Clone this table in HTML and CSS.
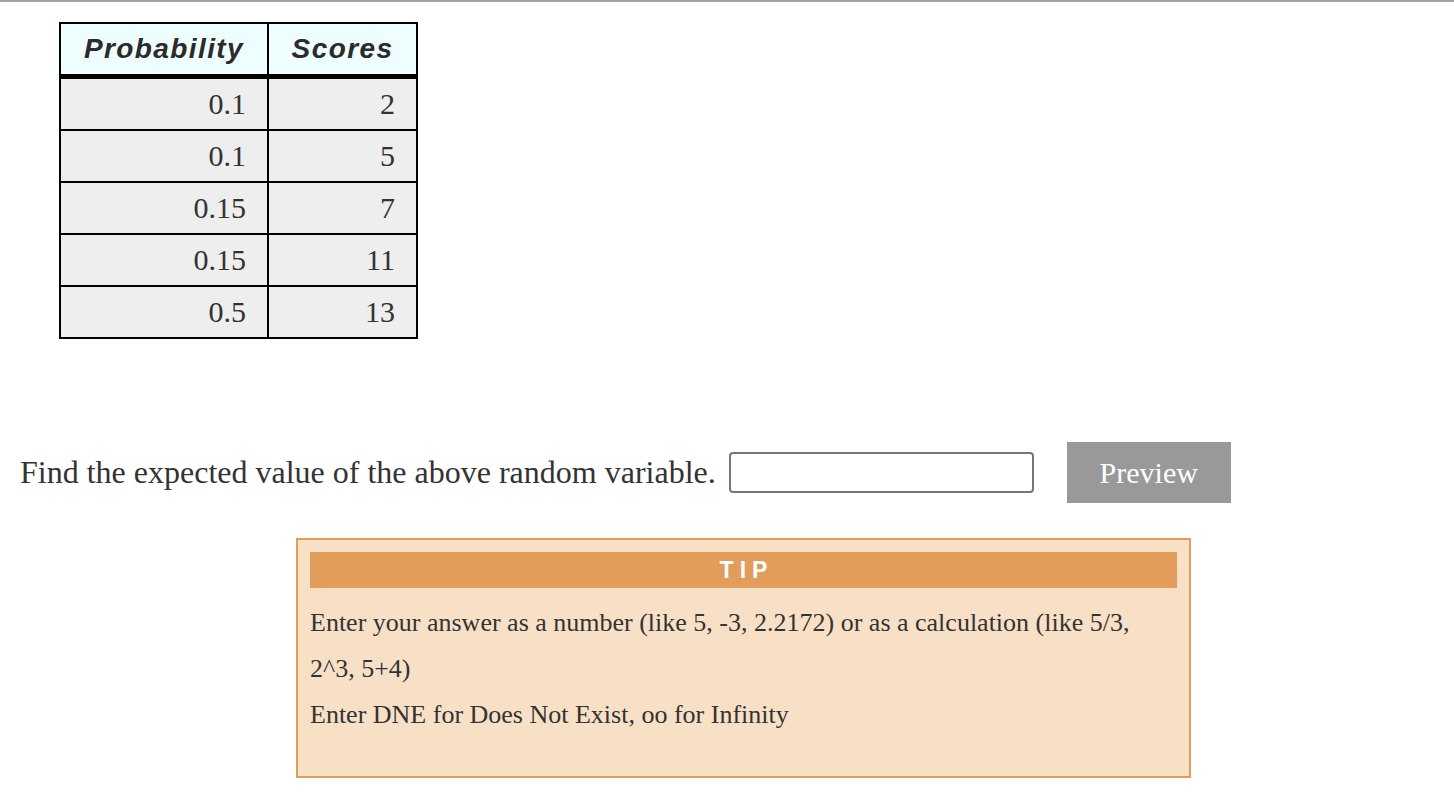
FILE: index.html
```html
<!DOCTYPE html>
<html>
<head>
<meta charset="utf-8">
<link rel="stylesheet" href="styles.css">
</head>
<body>
<div class="topline"></div>
<main class="problem">
  <table class="dist">
    <thead>
      <tr><th class="c1">Probability</th><th class="c2">Scores</th></tr>
    </thead>
    <tbody>
      <tr><td class="c1">0.1</td><td class="c2">2</td></tr>
      <tr><td class="c1">0.1</td><td class="c2">5</td></tr>
      <tr><td class="c1">0.15</td><td class="c2">7</td></tr>
      <tr><td class="c1">0.15</td><td class="c2">11</td></tr>
      <tr><td class="c1">0.5</td><td class="c2">13</td></tr>
    </tbody>
  </table>

  <div class="question">
    <span class="qtext">Find the expected value of the above random variable.</span>
    <input class="answer" type="text">
    <button class="preview">Preview</button>
  </div>

  <div class="tip">
    <div class="tip-title">TIP</div>
    <p class="tip-text">Enter your answer as a number (like 5, -3, 2.2172) or as a calculation (like 5/3, 2^3, 5+4)<br>Enter DNE for Does Not Exist, oo for Infinity</p>
  </div>
</main>
</body>
</html>
```

FILE: styles.css
```css
html, body {
  margin: 0;
  padding: 0;
  background: #ffffff;
}

body {
  font-family: "Liberation Serif", "Times New Roman", serif;
  color: #333333;
}

.topline {
  height: 2px;
  background: #a3a3a3;
}

.problem {
  padding-left: 20px;
  padding-top: 20px;
}

.dist {
  margin-left: 39px;
  border: 2px solid #000;
  border-spacing: 0;
  border-collapse: separate;
}

.dist th {
  box-sizing: content-box;
  height: 50px;
  padding: 0;
  background: #eefdfd;
  font-family: "Liberation Sans", Arial, sans-serif;
  font-weight: bold;
  font-style: italic;
  font-size: 28px;
  letter-spacing: 1.4px;
  color: #2b2b2b;
  text-align: center;
  border-bottom: 5px solid #000;
}

.dist td {
  box-sizing: content-box;
  height: 50px;
  padding: 0 21px 0 0;
  background: #eeeeee;
  font-size: 30px;
  text-align: right;
  color: #333;
  border-top: 2px solid #000;
}

.dist tbody tr:first-child td {
  border-top: 0;
}

.dist th.c1 {
  width: 206px;
  border-right: 2px solid #000;
}

.dist th.c2 {
  width: 147px;
}

.dist td.c1 {
  width: 185px;
  border-right: 2px solid #000;
}

.dist td.c2 {
  width: 126px;
}

.question {
  display: flex;
  align-items: center;
  margin-top: 103px;
}

.qtext {
  font-size: 32px;
  color: #333;
}

.answer {
  box-sizing: border-box;
  width: 305px;
  height: 41px;
  margin: 0 0 0 13px;
  border: 2px solid #767676;
  border-radius: 4px;
  background: #fff;
  padding: 0 6px;
}

.preview {
  box-sizing: border-box;
  width: 164px;
  height: 61px;
  margin-left: 33px;
  border: 0;
  background: #999999;
  color: #ffffff;
  font-family: "Liberation Serif", "Times New Roman", serif;
  font-size: 30px;
  padding: 0;
}

.tip {
  box-sizing: border-box;
  width: 895px;
  margin: 35px 0 0 276px;
  border: 2px solid #e29d5a;
  background: #f8e0c6;
  padding: 12px;
}

.tip-title {
  height: 36px;
  line-height: 36px;
  background: #e29d5a;
  color: #ffffff;
  font-family: "Liberation Sans", Arial, sans-serif;
  font-weight: bold;
  font-size: 23px;
  letter-spacing: 6px;
  text-align: center;
  padding-left: 6px;
}

.tip-text {
  margin: 12px 0 26px 0;
  padding-right: 24px;
  font-size: 26px;
  line-height: 46px;
  color: #333;
}
```
